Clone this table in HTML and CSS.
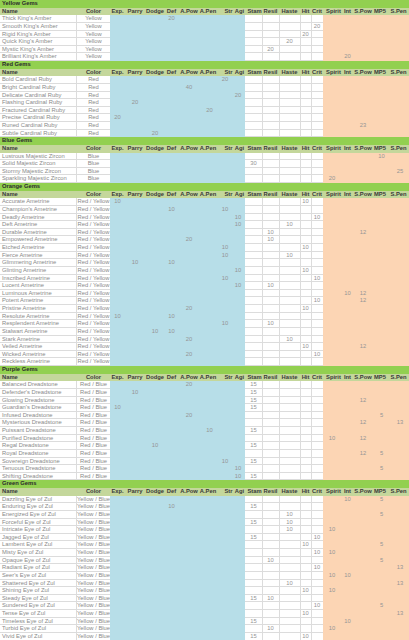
FILE: index.html
```html
<!DOCTYPE html>
<html>
<head>
<meta charset="utf-8">
<link rel="stylesheet" href="styles.css">
</head>
<body>
<div class="sheet">
<div class="t">Yellow Gems</div>
<div class="h"><span class="n">Name</span><span class="c">Color</span><span class="x3">Exp.</span><span class="x4">Parry</span><span class="x5">Dodge</span><span class="x6">Def</span><span class="x7">A.Pow</span><span class="x8">A.Pen</span><span class="x9">Str</span><span class="x10">Agi</span><span class="x11">Stam</span><span class="x12">Resil</span><span class="x13">Haste</span><span class="x14">Hit</span><span class="x15">Crit</span><span class="x16">Spirit</span><span class="x17">Int</span><span class="x18">S.Pow</span><span class="x19">MP5</span><span class="x20">S.Pen</span></div>
<div class="r"><span class="n">Thick King's Amber</span><span class="c">Yellow</span><span class="x6">20</span></div>
<div class="r"><span class="n">Smooth King's Amber</span><span class="c">Yellow</span><span class="x15">20</span></div>
<div class="r"><span class="n">Rigid King's Amber</span><span class="c">Yellow</span><span class="x14">20</span></div>
<div class="r"><span class="n">Quick King's Amber</span><span class="c">Yellow</span><span class="x13">20</span></div>
<div class="r"><span class="n">Mystic King's Amber</span><span class="c">Yellow</span><span class="x12">20</span></div>
<div class="r"><span class="n">Brilliant King's Amber</span><span class="c">Yellow</span><span class="x17">20</span></div>

<div class="t">Red Gems</div>
<div class="h"><span class="n">Name</span><span class="c">Color</span><span class="x3">Exp.</span><span class="x4">Parry</span><span class="x5">Dodge</span><span class="x6">Def</span><span class="x7">A.Pow</span><span class="x8">A.Pen</span><span class="x9">Str</span><span class="x10">Agi</span><span class="x11">Stam</span><span class="x12">Resil</span><span class="x13">Haste</span><span class="x14">Hit</span><span class="x15">Crit</span><span class="x16">Spirit</span><span class="x17">Int</span><span class="x18">S.Pow</span><span class="x19">MP5</span><span class="x20">S.Pen</span></div>
<div class="r"><span class="n">Bold Cardinal Ruby</span><span class="c">Red</span><span class="x9">20</span></div>
<div class="r"><span class="n">Bright Cardinal Ruby</span><span class="c">Red</span><span class="x7">40</span></div>
<div class="r"><span class="n">Delicate Cardinal Ruby</span><span class="c">Red</span><span class="x10">20</span></div>
<div class="r"><span class="n">Flashing Cardinal Ruby</span><span class="c">Red</span><span class="x4">20</span></div>
<div class="r"><span class="n">Fractured Cardinal Ruby</span><span class="c">Red</span><span class="x8">20</span></div>
<div class="r"><span class="n">Precise Cardinal Ruby</span><span class="c">Red</span><span class="x3">20</span></div>
<div class="r"><span class="n">Runed Cardinal Ruby</span><span class="c">Red</span><span class="x18">23</span></div>
<div class="r"><span class="n">Subtle Cardinal Ruby</span><span class="c">Red</span><span class="x5">20</span></div>

<div class="t">Blue Gems</div>
<div class="h"><span class="n">Name</span><span class="c">Color</span><span class="x3">Exp.</span><span class="x4">Parry</span><span class="x5">Dodge</span><span class="x6">Def</span><span class="x7">A.Pow</span><span class="x8">A.Pen</span><span class="x9">Str</span><span class="x10">Agi</span><span class="x11">Stam</span><span class="x12">Resil</span><span class="x13">Haste</span><span class="x14">Hit</span><span class="x15">Crit</span><span class="x16">Spirit</span><span class="x17">Int</span><span class="x18">S.Pow</span><span class="x19">MP5</span><span class="x20">S.Pen</span></div>
<div class="r"><span class="n">Lustrous Majestic Zircon</span><span class="c">Blue</span><span class="x19">10</span></div>
<div class="r"><span class="n">Solid Majestic Zircon</span><span class="c">Blue</span><span class="x11">30</span></div>
<div class="r"><span class="n">Stormy Majestic Zircon</span><span class="c">Blue</span><span class="x20">25</span></div>
<div class="r"><span class="n">Sparkling Majestic Zircon</span><span class="c">Blue</span><span class="x16">20</span></div>

<div class="t">Orange Gems</div>
<div class="h"><span class="n">Name</span><span class="c">Color</span><span class="x3">Exp.</span><span class="x4">Parry</span><span class="x5">Dodge</span><span class="x6">Def</span><span class="x7">A.Pow</span><span class="x8">A.Pen</span><span class="x9">Str</span><span class="x10">Agi</span><span class="x11">Stam</span><span class="x12">Resil</span><span class="x13">Haste</span><span class="x14">Hit</span><span class="x15">Crit</span><span class="x16">Spirit</span><span class="x17">Int</span><span class="x18">S.Pow</span><span class="x19">MP5</span><span class="x20">S.Pen</span></div>
<div class="r"><span class="n">Accurate Ametrine</span><span class="c">Red / Yellow</span><span class="x3">10</span><span class="x14">10</span></div>
<div class="r"><span class="n">Champion's Ametrine</span><span class="c">Red / Yellow</span><span class="x6">10</span><span class="x9">10</span></div>
<div class="r"><span class="n">Deadly Ametrine</span><span class="c">Red / Yellow</span><span class="x10">10</span><span class="x15">10</span></div>
<div class="r"><span class="n">Deft Ametrine</span><span class="c">Red / Yellow</span><span class="x10">10</span><span class="x13">10</span></div>
<div class="r"><span class="n">Durable Ametrine</span><span class="c">Red / Yellow</span><span class="x12">10</span><span class="x18">12</span></div>
<div class="r"><span class="n">Empowered Ametrine</span><span class="c">Red / Yellow</span><span class="x7">20</span><span class="x12">10</span></div>
<div class="r"><span class="n">Etched Ametrine</span><span class="c">Red / Yellow</span><span class="x9">10</span><span class="x14">10</span></div>
<div class="r"><span class="n">Fierce Ametrine</span><span class="c">Red / Yellow</span><span class="x9">10</span><span class="x13">10</span></div>
<div class="r"><span class="n">Glimmering Ametrine</span><span class="c">Red / Yellow</span><span class="x4">10</span><span class="x6">10</span></div>
<div class="r"><span class="n">Glinting Ametrine</span><span class="c">Red / Yellow</span><span class="x10">10</span><span class="x14">10</span></div>
<div class="r"><span class="n">Inscribed Ametrine</span><span class="c">Red / Yellow</span><span class="x9">10</span><span class="x15">10</span></div>
<div class="r"><span class="n">Lucent Ametrine</span><span class="c">Red / Yellow</span><span class="x10">10</span><span class="x12">10</span></div>
<div class="r"><span class="n">Luminous Ametrine</span><span class="c">Red / Yellow</span><span class="x17">10</span><span class="x18">12</span></div>
<div class="r"><span class="n">Potent Ametrine</span><span class="c">Red / Yellow</span><span class="x15">10</span><span class="x18">12</span></div>
<div class="r"><span class="n">Pristine Ametrine</span><span class="c">Red / Yellow</span><span class="x7">20</span><span class="x14">10</span></div>
<div class="r"><span class="n">Resolute Ametrine</span><span class="c">Red / Yellow</span><span class="x3">10</span><span class="x6">10</span></div>
<div class="r"><span class="n">Resplendent Ametrine</span><span class="c">Red / Yellow</span><span class="x9">10</span><span class="x12">10</span></div>
<div class="r"><span class="n">Stalwart Ametrine</span><span class="c">Red / Yellow</span><span class="x5">10</span><span class="x6">10</span></div>
<div class="r"><span class="n">Stark Ametrine</span><span class="c">Red / Yellow</span><span class="x7">20</span><span class="x13">10</span></div>
<div class="r"><span class="n">Veiled Ametrine</span><span class="c">Red / Yellow</span><span class="x14">10</span><span class="x18">12</span></div>
<div class="r"><span class="n">Wicked Ametrine</span><span class="c">Red / Yellow</span><span class="x7">20</span><span class="x15">10</span></div>
<div class="r"><span class="n">Reckless Ametrine</span><span class="c">Red / Yellow</span></div>

<div class="t">Purple Gems</div>
<div class="h"><span class="n">Name</span><span class="c">Color</span><span class="x3">Exp.</span><span class="x4">Parry</span><span class="x5">Dodge</span><span class="x6">Def</span><span class="x7">A.Pow</span><span class="x8">A.Pen</span><span class="x9">Str</span><span class="x10">Agi</span><span class="x11">Stam</span><span class="x12">Resil</span><span class="x13">Haste</span><span class="x14">Hit</span><span class="x15">Crit</span><span class="x16">Spirit</span><span class="x17">Int</span><span class="x18">S.Pow</span><span class="x19">MP5</span><span class="x20">S.Pen</span></div>
<div class="r"><span class="n">Balanced Dreadstone</span><span class="c">Red / Blue</span><span class="x7">20</span><span class="x11">15</span></div>
<div class="r"><span class="n">Defender's Dreadstone</span><span class="c">Red / Blue</span><span class="x4">10</span><span class="x11">15</span></div>
<div class="r"><span class="n">Glowing Dreadstone</span><span class="c">Red / Blue</span><span class="x11">15</span><span class="x18">12</span></div>
<div class="r"><span class="n">Guardian's Dreadstone</span><span class="c">Red / Blue</span><span class="x3">10</span><span class="x11">15</span></div>
<div class="r"><span class="n">Infused Dreadstone</span><span class="c">Red / Blue</span><span class="x7">20</span><span class="x19">5</span></div>
<div class="r"><span class="n">Mysterious Dreadstone</span><span class="c">Red / Blue</span><span class="x18">12</span><span class="x20">13</span></div>
<div class="r"><span class="n">Puissant Dreadstone</span><span class="c">Red / Blue</span><span class="x8">10</span><span class="x11">15</span></div>
<div class="r"><span class="n">Purified Dreadstone</span><span class="c">Red / Blue</span><span class="x16">10</span><span class="x18">12</span></div>
<div class="r"><span class="n">Regal Dreadstone</span><span class="c">Red / Blue</span><span class="x5">10</span><span class="x11">15</span></div>
<div class="r"><span class="n">Royal Dreadstone</span><span class="c">Red / Blue</span><span class="x18">12</span><span class="x19">5</span></div>
<div class="r"><span class="n">Sovereign Dreadstone</span><span class="c">Red / Blue</span><span class="x9">10</span><span class="x11">15</span></div>
<div class="r"><span class="n">Tenuous Dreadstone</span><span class="c">Red / Blue</span><span class="x10">10</span><span class="x19">5</span></div>
<div class="r"><span class="n">Shifting Dreadstone</span><span class="c">Red / Blue</span><span class="x10">10</span><span class="x11">15</span></div>

<div class="t">Green Gems</div>
<div class="h"><span class="n">Name</span><span class="c">Color</span><span class="x3">Exp.</span><span class="x4">Parry</span><span class="x5">Dodge</span><span class="x6">Def</span><span class="x7">A.Pow</span><span class="x8">A.Pen</span><span class="x9">Str</span><span class="x10">Agi</span><span class="x11">Stam</span><span class="x12">Resil</span><span class="x13">Haste</span><span class="x14">Hit</span><span class="x15">Crit</span><span class="x16">Spirit</span><span class="x17">Int</span><span class="x18">S.Pow</span><span class="x19">MP5</span><span class="x20">S.Pen</span></div>
<div class="r"><span class="n">Dazzling Eye of Zul</span><span class="c">Yellow / Blue</span><span class="x17">10</span><span class="x19">5</span></div>
<div class="r"><span class="n">Enduring Eye of Zul</span><span class="c">Yellow / Blue</span><span class="x6">10</span><span class="x11">15</span></div>
<div class="r"><span class="n">Energized Eye of Zul</span><span class="c">Yellow / Blue</span><span class="x13">10</span><span class="x19">5</span></div>
<div class="r"><span class="n">Forceful Eye of Zul</span><span class="c">Yellow / Blue</span><span class="x11">15</span><span class="x13">10</span></div>
<div class="r"><span class="n">Intricate Eye of Zul</span><span class="c">Yellow / Blue</span><span class="x13">10</span><span class="x16">10</span></div>
<div class="r"><span class="n">Jagged Eye of Zul</span><span class="c">Yellow / Blue</span><span class="x11">15</span><span class="x15">10</span></div>
<div class="r"><span class="n">Lambent Eye of Zul</span><span class="c">Yellow / Blue</span><span class="x14">10</span><span class="x19">5</span></div>
<div class="r"><span class="n">Misty Eye of Zul</span><span class="c">Yellow / Blue</span><span class="x15">10</span><span class="x16">10</span></div>
<div class="r"><span class="n">Opaque Eye of Zul</span><span class="c">Yellow / Blue</span><span class="x12">10</span><span class="x19">5</span></div>
<div class="r"><span class="n">Radiant Eye of Zul</span><span class="c">Yellow / Blue</span><span class="x15">10</span><span class="x20">13</span></div>
<div class="r"><span class="n">Seer's Eye of Zul</span><span class="c">Yellow / Blue</span><span class="x16">10</span><span class="x17">10</span></div>
<div class="r"><span class="n">Shattered Eye of Zul</span><span class="c">Yellow / Blue</span><span class="x13">10</span><span class="x20">13</span></div>
<div class="r"><span class="n">Shining Eye of Zul</span><span class="c">Yellow / Blue</span><span class="x14">10</span><span class="x16">10</span></div>
<div class="r"><span class="n">Steady Eye of Zul</span><span class="c">Yellow / Blue</span><span class="x11">15</span><span class="x12">10</span></div>
<div class="r"><span class="n">Sundered Eye of Zul</span><span class="c">Yellow / Blue</span><span class="x15">10</span><span class="x19">5</span></div>
<div class="r"><span class="n">Tense Eye of Zul</span><span class="c">Yellow / Blue</span><span class="x14">10</span><span class="x20">13</span></div>
<div class="r"><span class="n">Timeless Eye of Zul</span><span class="c">Yellow / Blue</span><span class="x11">15</span><span class="x17">10</span></div>
<div class="r"><span class="n">Turbid Eye of Zul</span><span class="c">Yellow / Blue</span><span class="x12">10</span><span class="x16">10</span></div>
<div class="r"><span class="n">Vivid Eye of Zul</span><span class="c">Yellow / Blue</span><span class="x11">15</span><span class="x14">10</span></div>
</div>
</body>
</html>
```

FILE: styles.css
```css
html, body {
  margin: 0;
  padding: 0;
  background: #ffffff;
}

.sheet {
  width: 409px;
  font-family: "Liberation Sans", Arial, sans-serif;
  font-size: 5.8px;
  --g: #dcdcdc;
}

.t,
.h,
.r {
  display: grid;
  grid-template-columns: 76px 34px 15px 20px 20px 13px 22px 19px 12px 14px 17px 17px 21px 11px 12px 18px 13px 18px 19px 18px;
  height: 7.625px;
  line-height: 7.625px;
  white-space: nowrap;
}

.t {
  display: block;
  background: #92d050;
  color: #2a2a2a;
  font-weight: bold;
  padding-left: 2px;
}

.h {
  background: #c4d79b;
  color: #3a3a3a;
  font-weight: bold;
}

.r {
  color: #8a8a8a;
  background:
    linear-gradient(var(--g), var(--g)) 0 100% / 110px 1px no-repeat,
    linear-gradient(var(--g), var(--g)) 245px 100% / 78px 1px no-repeat,
    linear-gradient(var(--g), var(--g)) 76px 0 / 1px 100% no-repeat,
    linear-gradient(var(--g), var(--g)) 262px 0 / 1px 100% no-repeat,
    linear-gradient(var(--g), var(--g)) 279px 0 / 1px 100% no-repeat,
    linear-gradient(var(--g), var(--g)) 300px 0 / 1px 100% no-repeat,
    linear-gradient(var(--g), var(--g)) 311px 0 / 1px 100% no-repeat,
    linear-gradient(to right, #ffffff 110px, #b7dee8 110px 245px, #ffffff 245px 323px, #fcd5b4 323px);
}

.h > span,
.r > span {
  grid-row: 1;
  display: flex;
  justify-content: center;
  min-width: 0;
}

.r > span {
  overflow: hidden;
}

.h > .n,
.r > .n {
  grid-column: 1;
  justify-content: flex-start;
  padding-left: 2px;
}

.h > .c,
.r > .c {
  grid-column: 2;
  display: block;
  text-align: center;
  padding-left: 1px;
  overflow: hidden;
}

.r > span:not(.n):not(.c) {
  color: #959595;
}

.x3 { grid-column: 3; }
.x4 { grid-column: 4; }
.x5 { grid-column: 5; }
.x6 { grid-column: 6; }
.x7 { grid-column: 7; }
.x8 { grid-column: 8; }
.x9 { grid-column: 9; }
.x10 { grid-column: 10; }
.x11 { grid-column: 11; }
.x12 { grid-column: 12; }
.x13 { grid-column: 13; }
.x14 { grid-column: 14; }
.x15 { grid-column: 15; }
.x16 { grid-column: 16; }
.x17 { grid-column: 17; }
.x18 { grid-column: 18; }
.x19 { grid-column: 19; }
.x20 { grid-column: 20; }

.h > .x8 { padding-right: 3px; }
.h > .x9 { padding-left: 7px; }
.h > .x10 { padding-left: 3px; }
.h > .x11 { padding-left: 2px; }
.h > .x16 { padding-left: 3px; }
.h > .x19 { padding-right: 3px; }
.h > .x20 { padding-right: 3px; }
```
